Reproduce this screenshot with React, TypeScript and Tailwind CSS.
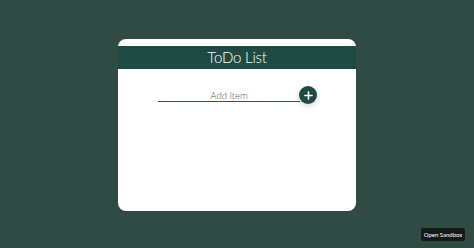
import React from "react";

export default function App() {
  return (
    <div className="relative w-[474px] h-[248px] bg-[#2f4b44] overflow-hidden" style={{ fontFamily: "Lato, 'Noto Sans', sans-serif" }}>
      <div className="pt-[39px] flex justify-center">
        <div className="w-[238px] h-[172px] bg-white rounded-[8px] overflow-hidden flex flex-col">
          <div className="h-[7px]" />
          <div className="h-[23px] bg-[#1f4a43] flex items-center justify-center">
            <span className="text-white text-[15px] font-light tracking-[-0.2px] leading-none">ToDo List</span>
          </div>
          <div className="flex items-start pl-[40px] pt-[17px]">
            <div className="w-[142px] h-[16px] border-b-[1.5px] border-[#3c4f4a] flex items-end justify-center">
              <span className="text-[#555] text-[9.5px] font-light leading-none mb-[1px]">Add Item</span>
            </div>
            <div className="-ml-[1px] w-[18px] h-[18px] rounded-full bg-[#1f4a43] flex items-center justify-center shadow-[0_2px_5px_rgba(120,60,160,0.25)]">
              <svg width="9" height="9" viewBox="0 0 10 10">
                <path d="M5 1v8M1 5h8" stroke="white" strokeWidth="1.8" strokeLinecap="round" />
              </svg>
            </div>
          </div>
        </div>
      </div>
      <div className="absolute left-[421px] top-[228px] w-[44px] h-[13px] bg-[#151a19] rounded-[2px] flex items-center justify-center">
        <span className="text-white text-[6px] leading-none">Open Sandbox</span>
      </div>
    </div>
  );
}
